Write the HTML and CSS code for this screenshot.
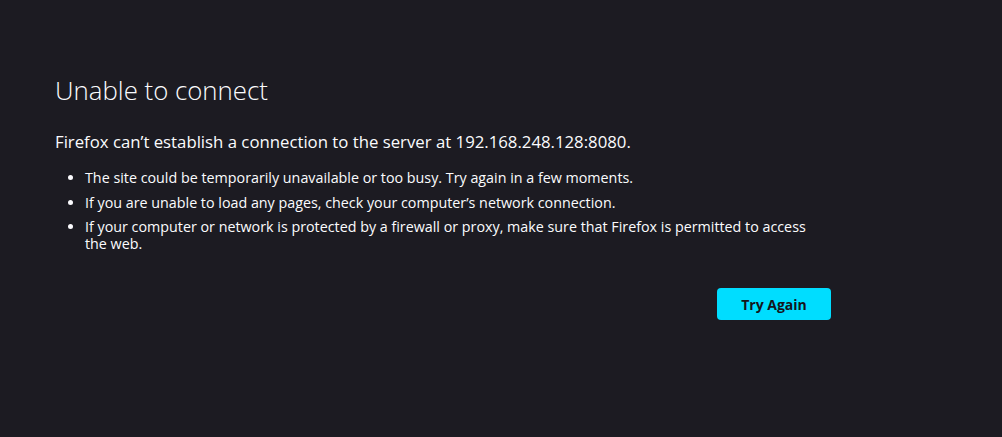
FILE: index.html
```html
<!DOCTYPE html>
<html lang="en">
<head>
<meta charset="utf-8">
<title>Problem loading page</title>
<link rel="stylesheet" href="styles.css">
</head>
<body>
<main class="container">
  <h1 class="title">Unable to connect</h1>
  <p class="intro">Firefox can’t establish a connection to the server at 192.168.248.128:8080.</p>
  <ul class="tips">
    <li>The site could be temporarily unavailable or too busy. Try again in a few moments.</li>
    <li>If you are unable to load any pages, check your computer’s network connection.</li>
    <li>If your computer or network is protected by a firewall or proxy, make sure that Firefox is permitted to access the web.</li>
  </ul>
  <div class="actions">
    <button class="retry" type="button">Try Again</button>
  </div>
</main>
</body>
</html>
```

FILE: styles.css
```css
html, body {
  margin: 0;
  padding: 0;
  background: #1c1b22;
  color: #fbfbfe;
  font-family: "Open Sans", "Noto Sans", sans-serif;
}

.container {
  width: 776px;
  padding: 74px 0 0 55px;
}

.title {
  margin: 0;
  font-size: 25.8px;
  font-weight: 300;
  line-height: 32px;
}

.intro {
  margin: 23.5px 0 0;
  font-size: 16.75px;
  line-height: 24px;
}

.tips {
  margin: 15.5px 0 0;
  padding: 0 0 0 30px;
  font-size: 14.3px;
  line-height: 17px;
}

.tips li + li {
  margin-top: 7.5px;
}

.actions {
  display: flex;
  justify-content: flex-end;
  margin-top: 36px;
}

.retry {
  width: 114px;
  height: 32px;
  padding: 0;
  border: 0;
  border-radius: 4px;
  background: #00ddff;
  color: #15141a;
  font-family: inherit;
  font-size: 14px;
  font-weight: 700;
  cursor: pointer;
}
```
